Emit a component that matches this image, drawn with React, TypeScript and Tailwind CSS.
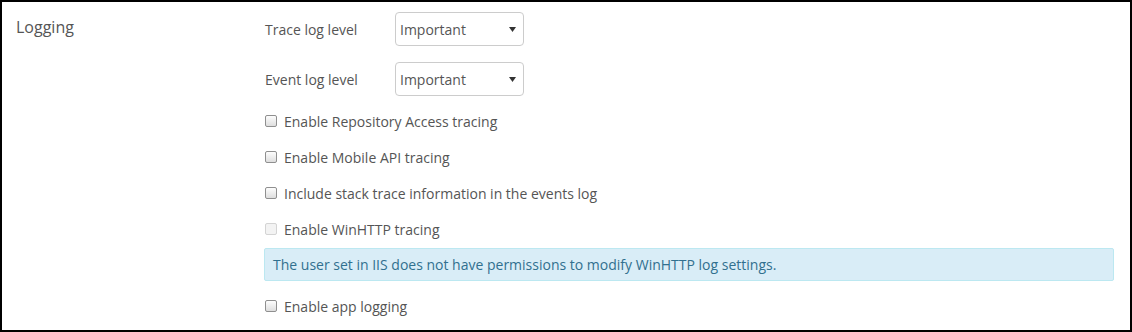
import React from 'react';

const font = { fontFamily: '"Open Sans", "Noto Sans", sans-serif' };

const Select: React.FC<{ value: string }> = ({ value }) => (
    <div className="flex items-center justify-between w-[129px] h-[34px] border border-[#cccccc] rounded-[4px] bg-white pl-[4px] pr-[6px] text-[14px] text-[#555555]">
        <span>{value}</span>
        <svg width="7" height="5" viewBox="0 0 7 5" className="mr-[1px]">
            <path d="M0 0h7L3.5 5z" fill="#333" />
        </svg>
    </div>
);

const Checkbox: React.FC<{ label: string; disabled?: boolean }> = ({ label, disabled }) => (
    <label className="flex items-center h-[20px] text-[14px] text-[#555555]">
        <span
            className={
                disabled
                    ? 'w-[12px] h-[12px] rounded-[2px] border border-[#d4d4d4] bg-[#f3f3f3] mr-[7px]'
                    : 'w-[12px] h-[12px] rounded-[2px] border border-[#8f8f8f] bg-gradient-to-b from-[#fdfdfd] to-[#dedede] mr-[7px]'
            }
        ></span>
        <span>{label}</span>
    </label>
);

export default function App() {
    return (
        <div className="w-[1132px] h-[332px] border-2 border-black bg-white flex" style={font}>
            {/* Section title */}
            <div className="w-[263px] pl-[14px] pt-[13px]">
                <h3 className="text-[16px] text-[#555555]">Logging</h3>
            </div>

            {/* Settings */}
            <div className="flex-1 pt-[10px] pr-[16px]">
                <div className="flex items-center h-[34px]">
                    <span className="w-[130px] text-[14px] text-[#555555]">Trace log level</span>
                    <Select value="Important" />
                </div>
                <div className="flex items-center h-[34px] mt-[16px]">
                    <span className="w-[130px] text-[14px] text-[#555555]">Event log level</span>
                    <Select value="Important" />
                </div>

                <div className="mt-[15px] flex flex-col gap-[16px]">
                    <Checkbox label="Enable Repository Access tracing" />
                    <Checkbox label="Enable Mobile API tracing" />
                    <Checkbox label="Include stack trace information in the events log" />
                    <Checkbox label="Enable WinHTTP tracing" disabled />
                </div>

                <div className="mt-[9px] -ml-[1px] h-[33px] flex items-center px-[8px] bg-[#d9edf7] border border-[#bce8f1] rounded-[2px] text-[14px] text-[#31708f]">
                    The user set in IIS does not have permissions to modify WinHTTP log settings.
                </div>

                <div className="mt-[15px]">
                    <Checkbox label="Enable app logging" />
                </div>
            </div>
        </div>
    );
}
